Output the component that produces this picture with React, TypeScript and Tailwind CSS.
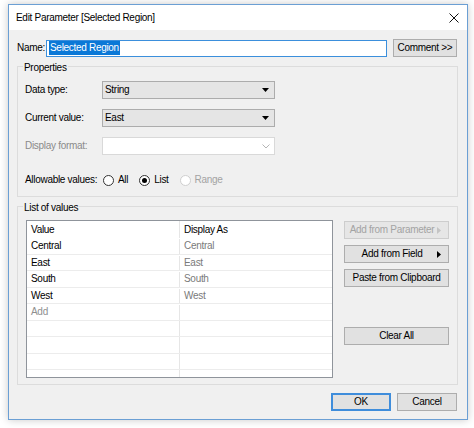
import type { ReactNode } from "react";

const rows = [
  { value: "Central", display: "Central" },
  { value: "East", display: "East" },
  { value: "South", display: "South" },
  { value: "West", display: "West" },
];

const DownArrow = () => (
  <svg width="7" height="4" viewBox="0 0 7 4">
    <path d="M0 0 H7 L3.5 4 Z" fill="#000" />
  </svg>
);

const RightArrow = ({ color }: { color: string }) => (
  <svg width="4" height="7" viewBox="0 0 4 7">
    <path d="M0 0 V7 L4 3.5 Z" fill={color} />
  </svg>
);

const Radio = ({
  label,
  checked,
  disabled,
}: {
  label: string;
  checked?: boolean;
  disabled?: boolean;
}) => (
  <div className="flex items-center gap-[4px]">
    <div
      className={`flex h-[11px] w-[11px] items-center justify-center rounded-full border bg-white ${
        disabled ? "border-[#cfcfcf]" : "border-[#333333]"
      }`}
    >
      {checked && <div className="h-[5px] w-[5px] rounded-full bg-black" />}
    </div>
    <span className={disabled ? "text-[#a3a3a3]" : "text-black"}>{label}</span>
  </div>
);

const SideButton = ({
  children,
  className = "",
}: {
  children: ReactNode;
  className?: string;
}) => (
  <div
    className={`flex h-[18px] w-[105px] items-center border ${className}`}
  >
    {children}
  </div>
);

export default function App() {
  return (
    <div className="h-[428px] w-[474px] whitespace-nowrap bg-white pl-[8px] pt-[4px] font-['Liberation_Sans',Arial,sans-serif] text-[10px] leading-[14px] tracking-[-0.3px] text-black">
      <div className="flex h-[416px] w-[460px] flex-col border border-[#6b9fd4] shadow-[0_0_8px_rgba(0,0,0,0.22)]">
        {/* title bar */}
        <div className="flex h-[25px] shrink-0 items-center justify-between bg-white pl-[7px] pr-[8px]">
          <span>Edit Parameter [Selected Region]</span>
          <svg width="10" height="10" viewBox="0 0 10 10">
            <path d="M0.5 0.5 L9.5 9.5 M9.5 0.5 L0.5 9.5" stroke="#111" strokeWidth="1" />
          </svg>
        </div>

        <div className="flex flex-1 flex-col bg-[#f0f0f0] pl-[8px] pr-[9px] pt-[9px]">
          {/* name row */}
          <div className="flex items-center">
            <span className="w-[29px]">Name:</span>
            <div className="flex h-[17px] w-[341px] items-center border border-[#3b8fdc] bg-white pl-[2px]">
              <span className="bg-[#0a78d7] px-[1px] text-white">Selected Region</span>
            </div>
            <div className="ml-[6px] flex h-[18px] w-[64px] items-center justify-center border border-[#adadad] bg-[#e1e1e1]">
              Comment &gt;&gt;
            </div>
          </div>

          {/* properties */}
          <fieldset className="w-[441px] border border-[#dcdcdc] pb-[9px] pl-[7px] pt-[5px]">
            <legend className="-ml-[2px] px-[1px] pt-[3px] leading-[16px]">Properties</legend>

            <div className="flex items-center">
              <span className="w-[77px]">Data type:</span>
              <div className="flex h-[18px] w-[173px] items-center justify-between border border-[#acacac] bg-[#e5e5e5] pl-[2px] pr-[5px]">
                <span>String</span>
                <DownArrow />
              </div>
            </div>

            <div className="mt-[10px] flex items-center">
              <span className="w-[77px]">Current value:</span>
              <div className="flex h-[18px] w-[173px] items-center justify-between border border-[#acacac] bg-[#e5e5e5] pl-[2px] pr-[5px]">
                <span>East</span>
                <DownArrow />
              </div>
            </div>

            <div className="mt-[10px] flex items-center">
              <span className="w-[77px] text-[#8a8a8a]">Display format:</span>
              <div className="flex h-[18px] w-[173px] items-center justify-end border border-[#d9d9d9] bg-white pr-[4px]">
                <svg width="8" height="5" viewBox="0 0 8 5">
                  <path d="M0.5 0.5 L4 4 L7.5 0.5" fill="none" stroke="#b5b5b5" strokeWidth="1" />
                </svg>
              </div>
            </div>

            <div className="mt-[18px] flex items-center">
              <span className="w-[78px]">Allowable values:</span>
              <div className="flex items-center gap-[11px]">
                <Radio label="All" />
                <Radio label="List" checked />
                <Radio label="Range" disabled />
              </div>
            </div>
          </fieldset>

          {/* list of values */}
          <fieldset className="w-[441px] border border-[#dcdcdc] pb-[6px] pl-[8px] pt-[4px]">
            <legend className="-ml-[3px] px-[1px] pt-[3px] leading-[16px]">List of values</legend>

            <div className="flex">
              <div className="h-[158px] w-[307px] overflow-hidden border border-[#8f949b] bg-white">
                <div className="flex h-[17px] items-center">
                  <div className="flex h-full w-[153px] items-center border-r border-[#e6e6e6] pl-[4px]">Value</div>
                  <div className="pl-[4px]">Display As</div>
                </div>
                {rows.map((r) => (
                  <div key={r.value} className="flex h-[16.5px] items-center border-b border-[#ececec] pt-[1px]">
                    <div className="flex h-full w-[153px] items-center border-r border-[#e6e6e6] pl-[4px]">{r.value}</div>
                    <div className="pl-[4px] text-[#7a7a7a]">{r.display}</div>
                  </div>
                ))}
                <div className="flex h-[16.5px] items-center border-b border-[#ececec] pt-[1px]">
                  <div className="flex h-full w-[153px] items-center border-r border-[#e6e6e6] pl-[4px] text-[#8f8f8f]">Add</div>
                </div>
                {[0, 1, 2, 3].map((i) => (
                  <div key={i} className="flex h-[16.5px] border-b border-[#ececec]">
                    <div className="h-full w-[153px] border-r border-[#e6e6e6]" />
                  </div>
                ))}
              </div>

              <div className="ml-[11px] mt-[1px] flex flex-col">
                <SideButton className="border-[#cdcdcd] bg-[#e6e6e6] pl-[2px] pr-[7px] text-[#a3a3a3]">
                  <span className="flex-1 text-center">Add from Parameter</span>
                  <RightArrow color="#c4c4c4" />
                </SideButton>
                <SideButton className="mt-[6px] border-[#adadad] bg-[#e1e1e1] pl-[2px] pr-[7px]">
                  <span className="flex-1 text-center">Add from Field</span>
                  <RightArrow color="#000" />
                </SideButton>
                <SideButton className="mt-[6px] justify-center border-[#adadad] bg-[#e1e1e1]">Paste from Clipboard</SideButton>
                <SideButton className="mt-[40px] justify-center border-[#adadad] bg-[#e1e1e1]">Clear All</SideButton>
              </div>
            </div>
          </fieldset>

          {/* footer */}
          <div className="mt-[8px] flex justify-end gap-[6px] pr-[1px]">
            <div className="flex h-[18px] w-[60px] items-center justify-center border-2 border-[#3f8ddb] bg-[#e1e1e1]">
              OK
            </div>
            <div className="flex h-[18px] w-[60px] items-center justify-center border border-[#adadad] bg-[#e1e1e1]">
              Cancel
            </div>
          </div>
        </div>
      </div>
    </div>
  );
}
